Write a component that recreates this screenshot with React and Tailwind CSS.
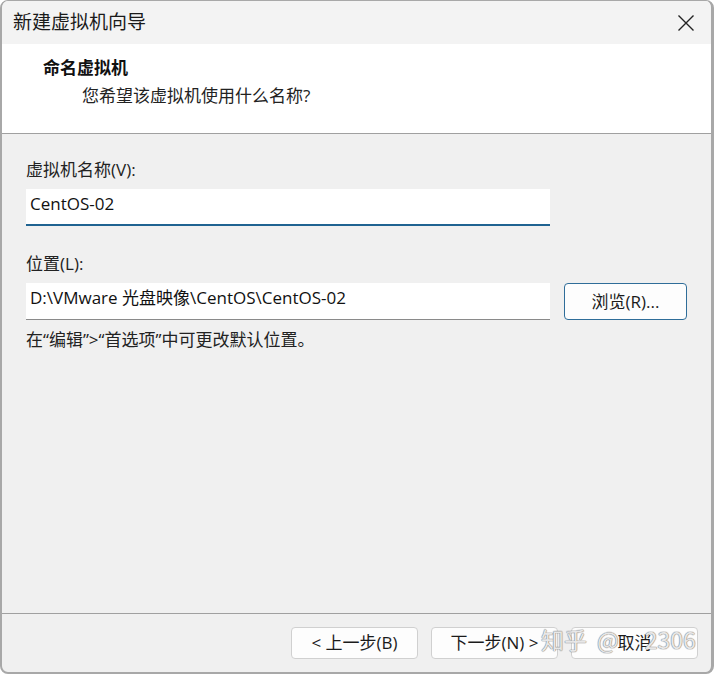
import React from 'react';

const cjk = { fontFamily: '"Segoe UI", "Open Sans", "Noto Sans CJK SC", sans-serif' };

const FooterButton = ({ children }) => (
  <button className="w-[127px] h-[32px] rounded-[4px] border border-[#d0d0d0] bg-[#fdfdfd] text-[17px] text-[#1b1b1b] flex items-center justify-center">
    {children}
  </button>
);

export default function App() {
  return (
    <div className="w-[714px] h-[674px] bg-white" style={cjk}>
      <div className="relative w-full h-full flex flex-col border-l-2 border-r-[3px] border-t border-b-2 border-[#a8a8a8] rounded-[8px] overflow-hidden bg-[#f0f0f0]">
        {/* Title bar */}
        <div className="h-[43px] shrink-0 bg-[#f3f3f3] flex items-center justify-between pl-[11px] pr-[16px]">
          <span className="text-[19px] text-[#1a1a1a] leading-none">新建虚拟机向导</span>
          <svg width="18" height="18" viewBox="0 0 18 18" fill="none" stroke="#222" strokeWidth="1.4">
            <path d="M1.5 1.5 L16.5 16.5 M16.5 1.5 L1.5 16.5" />
          </svg>
        </div>

        {/* Header */}
        <div className="h-[90px] shrink-0 bg-white border-b border-[#a0a0a0] pl-[41px] pt-[12px]">
          <div className="text-[17px] font-bold text-[#111] leading-[24px]">命名虚拟机</div>
          <div className="pl-[39px] mt-[4px] text-[17px] text-[#222] leading-[24px]">您希望该虚拟机使用什么名称?</div>
        </div>

        {/* Body */}
        <div className="flex-1 px-[24px] pt-[24px]">
          <div className="text-[17px] text-[#222] leading-[24px]">虚拟机名称(V):</div>
          <div className="mt-[7px] w-[524px] h-[37px] bg-white border-b-2 border-[#1f6391] flex items-center pl-[4px] pb-[6px] text-[17px] text-[#111]">
            CentOS-02
          </div>

          <div className="mt-[26px] text-[17px] text-[#222] leading-[24px]">位置(L):</div>
          <div className="mt-[7px] flex items-center gap-[14px]">
            <div className="w-[524px] h-[37px] bg-white border-b border-[#8a8a8a] flex items-center pl-[4px] pb-[6px] text-[17px] text-[#111]">
              D:\VMware 光盘映像\CentOS\CentOS-02
            </div>
            <button className="w-[123px] h-[37px] rounded-[4px] border border-[#2f6d99] bg-[#fdfdfd] text-[17px] text-[#1b1b1b] flex items-center justify-center">
              浏览(R)...
            </button>
          </div>

          <div className="mt-[8px] text-[17px] text-[#222] leading-[24px]">在“编辑”&gt;“首选项”中可更改默认位置。</div>
        </div>

        {/* Footer */}
        <div className="h-[59px] shrink-0 border-t border-[#a0a0a0] flex items-start justify-end gap-[13px] pt-[13px] pr-[13px]">
          <FooterButton>&lt; 上一步(B)</FooterButton>
          <FooterButton>下一步(N) &gt;</FooterButton>
          <FooterButton>取消</FooterButton>
        </div>

        {/* watermark */}
        <div
          className="absolute left-[539px] top-[627px] text-[23px] text-white/80 leading-none pointer-events-none flex gap-[10px]"
          style={{ textShadow: '0 0 1px #888, 0 0 1px #888, 0 0 1px #888', fontFamily: '"Noto Sans CJK SC", sans-serif' }}
        >
          <span>知乎</span>
          <span>@</span>
          <span className="w-[6px]"></span>
          <span>2306</span>
        </div>
      </div>
    </div>
  );
}
